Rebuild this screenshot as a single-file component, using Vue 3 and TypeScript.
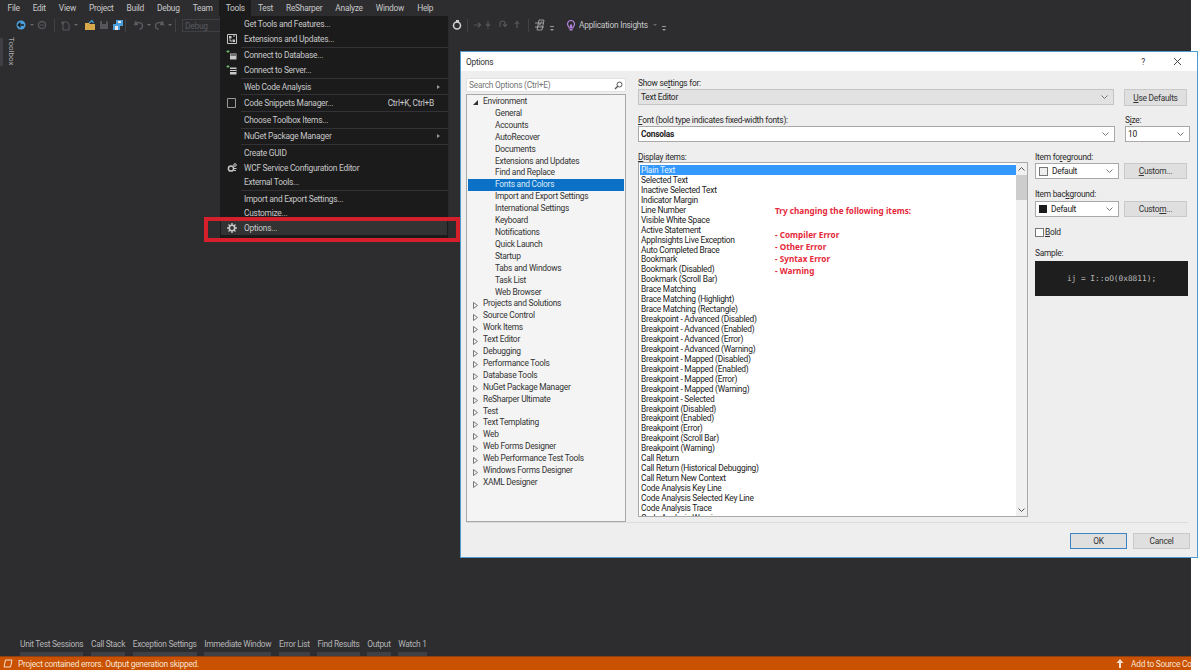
<script setup lang="ts">
const menus = ['File','Edit','View','Project','Build','Debug','Team','Tools','Test','ReSharper','Analyze','Window','Help']
type Row = { t: string; key?: string; arrow?: boolean; sep?: boolean; icon?: string; cut?: boolean }
const rows: Row[] = [
  { t: 'Get Tools and Features...' },
  { t: 'Extensions and Updates...', icon: 'ext', sep: true },
  { t: 'Connect to Database...', icon: 'db' },
  { t: 'Connect to Server...', icon: 'srv', sep: true },
  { t: 'Web Code Analysis', arrow: true, sep: true },
  { t: 'Code Snippets Manager...', key: 'Ctrl+K, Ctrl+B', icon: 'snip', sep: true },
  { t: 'Choose Toolbox Items...', sep: true },
  { t: 'NuGet Package Manager', arrow: true, sep: true },
  { t: 'Create GUID' },
  { t: 'WCF Service Configuration Editor', icon: 'wcf' },
  { t: 'External Tools...', sep: true },
  { t: 'Import and Export Settings...' },
  { t: 'Customize...' },
]
const envChildren = ['General','Accounts','AutoRecover','Documents','Extensions and Updates','Find and Replace','Fonts and Colors','Import and Export Settings','International Settings','Keyboard','Notifications','Quick Launch','Startup','Tabs and Windows','Task List','Web Browser']
const collapsed = ['Projects and Solutions','Source Control','Work Items','Text Editor','Debugging','Performance Tools','Database Tools','NuGet Package Manager','ReSharper Ultimate','Test','Text Templating','Web','Web Forms Designer','Web Performance Test Tools','Windows Forms Designer','XAML Designer']
const display = ['Plain Text','Selected Text','Inactive Selected Text','Indicator Margin','Line Number','Visible White Space','Active Statement','AppInsights Live Exception','Auto Completed Brace','Bookmark','Bookmark (Disabled)','Bookmark (Scroll Bar)','Brace Matching','Brace Matching (Highlight)','Brace Matching (Rectangle)','Breakpoint - Advanced (Disabled)','Breakpoint - Advanced (Enabled)','Breakpoint - Advanced (Error)','Breakpoint - Advanced (Warning)','Breakpoint - Mapped (Disabled)','Breakpoint - Mapped (Enabled)','Breakpoint - Mapped (Error)','Breakpoint - Mapped (Warning)','Breakpoint - Selected','Breakpoint (Disabled)','Breakpoint (Enabled)','Breakpoint (Error)','Breakpoint (Scroll Bar)','Breakpoint (Warning)','Call Return','Call Return (Historical Debugging)','Call Return New Context','Code Analysis Key Line','Code Analysis Selected Key Line','Code Analysis Trace','Code Analysis Warning']
const notes = ['- Compiler Error','- Other Error','- Syntax Error','- Warning']
const tabs = ['Unit Test Sessions','Call Stack','Exception Settings','Immediate Window','Error List','Find Results','Output','Watch 1']
</script>

<template>
  <div class="page">
    <div class="ide">
      <nav class="menubar">
        <span v-for="m in menus" :key="m" class="mi" :class="{ open: m === 'Tools' }">{{ m }}</span>
      </nav>

      <div class="toolbar">
        <div class="tb-left">
          <svg width="12" height="12" viewBox="0 0 12 12" class="tb-i"><circle cx="6" cy="6" r="4.5" fill="#4a9fdc"/><path d="M3 6h6M5.5 3.8 3.2 6l2.3 2.2" stroke="#1e1e1e" stroke-width="1.3" fill="none"/></svg>
          <span class="drop"></span>
          <svg width="10" height="10" viewBox="0 0 10 10" class="tb-i m1"><circle cx="5" cy="5" r="3.6" fill="none" stroke="#55555a" stroke-width="1.5"/><path d="M3 5h4" stroke="#55555a"/></svg>
          <i class="tb-sep"></i>
          <svg width="10" height="11" viewBox="0 0 10 11" class="tb-i"><path d="M2 2h4l2 2v6H2z" fill="none" stroke="#59595e"/><path d="M0 3h3M1.5 1.500v3" stroke="#59595e"/></svg>
          <span class="drop"></span>
          <svg width="12" height="11" viewBox="0 0 12 11" class="tb-i m2"><path d="M1 3h4l1 1h5v6H1z" fill="#d7a94b"/><path d="M5 3l3-2.500L9.500 3" fill="none" stroke="#4a9fdc" stroke-width="1.300"/></svg>
          <svg width="10" height="10" viewBox="0 0 10 10" class="tb-i m3"><path d="M1 1h7l1 1v7H1z" fill="#55555a"/><path d="M3 1h4v3H3z" fill="#2d2d30"/></svg>
          <svg width="12" height="12" viewBox="0 0 12 12" class="tb-i m3"><path d="M4 1h7v6H8v4H1V5h3z" fill="#4a9fdc"/><path d="M3 7h3v4H3zM6 2h3v2H6z" fill="#e8e8e8"/></svg>
          <i class="tb-sep s2"></i>
          <svg width="11" height="10" viewBox="0 0 11 10" class="tb-i"><path d="M3 1 1.500 4.500 5 4.500M2 4.500C4 1.500 9.500 2 9.500 6c0 2-1.500 3-3 3.500" fill="none" stroke="#59595e" stroke-width="1.400"/></svg>
          <span class="drop"></span>
          <svg width="11" height="10" viewBox="0 0 11 10" class="tb-i m1"><path d="M8 1l1.500 3.500H6M9 4.500C7 1.500 1.500 2 1.500 6c0 2 1.500 3 3 3.500" fill="none" stroke="#59595e" stroke-width="1.400"/></svg>
          <span class="drop"></span>
          <i class="tb-sep s3"></i>
          <span class="debug">Debug</span>
        </div>
        <div class="tb-right">
          <svg width="10" height="10" viewBox="0 0 10 10"><circle cx="5" cy="5.500" r="3.500" fill="none" stroke="#d0d0d0" stroke-width="1.600"/><path d="M4 0h3v2.500H4z" fill="#d0d0d0"/></svg>
          <i class="tb-sep s4"></i>
          <svg width="52" height="10" viewBox="0 0 52 10" class="steps"><path d="M1 5h6M5 2.500 7.500 5 5 7.500" fill="none" stroke="#55555a" stroke-width="1.200"/><path d="M15 1v5M13 4l2 2.500L17 4M15 8v1" fill="none" stroke="#55555a" stroke-width="1.200"/><path d="M27 7V3.500a2.500 2.500 0 0 1 5 0V6M30 4.500 32 6.500 34 4.500" fill="none" stroke="#55555a" stroke-width="1.200"/><path d="M44 8V2M42 4l2-2.500L46 4" fill="none" stroke="#55555a" stroke-width="1.200"/></svg>
          <i class="tb-sep s5"></i>
          <svg width="11" height="12" viewBox="0 0 11 12"><path d="M3 11 5 1h5L8 11zM1 4h9M1 8h9" fill="none" stroke="#a4a4a6" stroke-width=".9"/><path d="M4 3 9 9M8 2 3 9" stroke="#a4a4a6" stroke-width=".7"/></svg>
          <span class="ovf o1"></span>
          <svg width="8" height="11" viewBox="0 0 8 11" class="bulb"><path d="M4 .5a3.400 3.400 0 0 1 2 6.200V8H2V6.700A3.400 3.400 0 0 1 4 .5z" fill="none" stroke="#b180d7" stroke-width="1.200"/><path d="M3 4.500h2V8H3zM2.500 9h3v1.500h-3z" fill="#b180d7"/></svg>
          <span class="ai">Application Insights</span>
          <span class="drop d2"></span>
          <span class="ovf"></span>
        </div>
      </div>

      <main class="work">
        <aside class="toolstrip"><span class="toolbox">Toolbox</span></aside>
      </main>

      <div class="tabs">
        <span v-for="t in tabs" :key="t" class="tab">{{ t }}</span>
      </div>

      <footer class="status">
        <svg width="10" height="9" viewBox="0 0 10 9" class="st-i"><path d="M2.500 1H9L7.500 8H1z" fill="none" stroke="#f4e0d2" stroke-width="1"/></svg>
        <span class="st-t">Project contained errors. Output generation skipped.</span>
        <svg width="8" height="9" viewBox="0 0 8 9" class="st-up"><path d="M4 0 7.500 4H5v5H3V4H.5z" fill="#f4e0d2"/></svg>
        <span class="st-src">Add to Source Control</span>
      </footer>
    </div>

    <!-- Tools menu -->
    <div class="menu">
      <template v-for="r in rows" :key="r.t">
        <div class="row">
          <span class="ric">
            <svg v-if="r.icon === 'ext'" width="10" height="10" viewBox="0 0 10 10"><path d="M.5.5h9v9h-9z" fill="none" stroke="#c8c8c8"/><path d="M2 2h2.500v2.500H2zM5.500 5.500H8V8H5.500z" fill="#c8c8c8"/><path d="M6 2h2M2 6h2v2" stroke="#c8c8c8" fill="none"/></svg>
            <svg v-else-if="r.icon === 'db'" width="11" height="10" viewBox="0 0 11 10"><path d="M4 3.500h6.500V9.500H4z" fill="#c8c8c8"/><path d="M4.500 5h5.500" stroke="#1b1b1c"/><path d="M.500 1.500h3M2 0v3" stroke="#6fb56f"/></svg>
            <svg v-else-if="r.icon === 'srv'" width="11" height="10" viewBox="0 0 11 10"><path d="M4 2.500h6.500v7H4z" fill="#c8c8c8"/><path d="M4 4.500h6.500M4 6.500h6.500" stroke="#1b1b1c"/><path d="M.500 1.500h3M2 0v3" stroke="#6fb56f"/></svg>
            <svg v-else-if="r.icon === 'snip'" width="9" height="10" viewBox="0 0 9 10"><path d="M.5.5h8v9h-8z" fill="none" stroke="#9a9a9a"/></svg>
            <svg v-else-if="r.icon === 'wcf'" width="10" height="10" viewBox="0 0 10 10"><circle cx="4" cy="5.500" r="2.600" fill="none" stroke="#c8c8c8" stroke-width="1.500"/><circle cx="8" cy="2" r="1.300" fill="none" stroke="#c8c8c8"/><path d="M7 5.500h2.500M7 7.500h2" stroke="#c8c8c8"/></svg>
          </span>
          <span class="rt">{{ r.t }}</span>
          <span v-if="r.key" class="rk">{{ r.key }}</span>
          <span v-if="r.arrow" class="ra"></span>
        </div>
        <div v-if="r.sep" class="msep"></div>
      </template>
      <div class="row sel">
        <span class="ric">
          <svg width="10" height="10" viewBox="0 0 10 10"><circle cx="5" cy="5" r="2.700" fill="none" stroke="#c8c8c8" stroke-width="1.600"/><path d="M5 0v2M5 8v2M0 5h2M8 5h2M1.500 1.500 3 3M7 7l1.500 1.500M8.500 1.500 7 3M3 7 1.500 8.500" stroke="#c8c8c8" stroke-width="1.300"/></svg>
        </span>
        <span class="rt">Options...</span>
      </div>
    </div>
    <div class="redbox"></div>

    <!-- Options dialog -->
    <section class="dialog">
      <header class="dlg-title">
        <span>Options</span>
        <span class="help">?</span>
        <svg width="9" height="9" viewBox="0 0 9 9"><path d="M1 1l7 7M8 1 1 8" stroke="#333" stroke-width=".9"/></svg>
      </header>

      <div class="dlg-body">
        <div class="left">
          <div class="search">
            <span>Search Options (Ctrl+E)</span>
            <svg width="9" height="9" viewBox="0 0 9 9"><circle cx="5.500" cy="3.500" r="2.500" fill="none" stroke="#555" stroke-width="1"/><path d="M3.700 5.300 1 8" stroke="#555" stroke-width="1.400"/></svg>
          </div>
          <div class="tree">
            <div class="node"><svg width="5" height="5" viewBox="0 0 5 5" class="tw"><path d="M5 0v5H0z" fill="#333"/></svg>Environment</div>
            <div v-for="c in envChildren" :key="c" class="node child" :class="{ cur: c === 'Fonts and Colors' }">{{ c }}</div>
            <div v-for="c in collapsed" :key="c" class="node"><svg width="5" height="7" viewBox="0 0 5 7" class="tw"><path d="M.5.5 4.500 3.500.5 6.500z" fill="none" stroke="#777"/></svg>{{ c }}</div>
          </div>
        </div>

        <div class="right">
          <label class="lbl">Show se<u>t</u>tings for:</label>
          <div class="line">
            <div class="combo gray grow"><span>Text Editor</span><svg class="chev" width="7" height="4" viewBox="0 0 7 4"><path d="M.5.5 3.500 3.500 6.500.5" fill="none" stroke="#777"/></svg></div>
            <button class="btn ud"><u>U</u>se Defaults</button>
          </div>

          <div class="line lbls">
            <label class="lbl grow"><u>F</u>ont (bold type indicates fixed-width fonts):</label>
            <label class="lbl sz">S<u>i</u>ze:</label>
          </div>
          <div class="line">
            <div class="combo grow"><b>Consolas</b><svg class="chev" width="7" height="4" viewBox="0 0 7 4"><path d="M.5.5 3.500 3.500 6.500.5" fill="none" stroke="#777"/></svg></div>
            <div class="combo size"><span>10</span><svg class="chev" width="7" height="4" viewBox="0 0 7 4"><path d="M.5.5 3.500 3.500 6.500.5" fill="none" stroke="#777"/></svg></div>
          </div>

          <div class="main">
            <div class="disp">
              <label class="lbl"><u>D</u>isplay items:</label>
              <div class="list">
                <div class="items">
                  <div v-for="(d, i) in display" :key="d" class="item" :class="{ on: i === 0 }">{{ d }}</div>
                  <div class="note">
                    <p>Try changing the following items:</p>
                    <p v-for="n in notes" :key="n">{{ n }}</p>
                  </div>
                </div>
                <div class="sb">
                  <svg width="7" height="4" viewBox="0 0 7 4"><path d="M.5 3.500 3.500.5 6.500 3.500" fill="none" stroke="#555"/></svg>
                  <div class="thumb"></div>
                  <svg width="7" height="4" viewBox="0 0 7 4"><path d="M.5.5 3.500 3.500 6.500.5" fill="none" stroke="#555"/></svg>
                </div>
              </div>
            </div>
            <div class="side">
              <label class="lbl">Item fo<u>r</u>eground:</label>
              <div class="line cl">
                <div class="combo color"><i class="sw light"></i><span>Default</span><svg class="chev" width="7" height="4" viewBox="0 0 7 4"><path d="M.5.5 3.500 3.500 6.500.5" fill="none" stroke="#777"/></svg></div>
                <button class="btn cu"><u>C</u>ustom...</button>
              </div>
              <label class="lbl l2">Item bac<u>k</u>ground:</label>
              <div class="line cl">
                <div class="combo color"><i class="sw dark"></i><span>Default</span><svg class="chev" width="7" height="4" viewBox="0 0 7 4"><path d="M.5.5 3.500 3.500 6.500.5" fill="none" stroke="#777"/></svg></div>
                <button class="btn cu">Custo<u>m</u>...</button>
              </div>
              <div class="check"><i></i><span><u>B</u>old</span></div>
              <label class="lbl l3">Sample:</label>
              <div class="sample">ij = I::oO(0x8811);</div>
            </div>
          </div>
        </div>
      </div>

      <div class="dlg-foot">
        <button class="btn ok">OK</button>
        <button class="btn cancel">Cancel</button>
      </div>
    </section>
  </div>
</template>

<style>
html, body { margin: 0; background: #fff; }
</style>

<style scoped>
.page { position: relative; width: 1200px; height: 670px; overflow: hidden; background: #fff; font-family: Roboto, "Noto Sans", sans-serif; font-size: 8.4px; letter-spacing: -.25px; color: #222; }
.ide { width: 1191px; height: 670px; background: #2d2d30; display: flex; flex-direction: column; color: #c8c8c8; }

.menubar { height: 16px; display: flex; align-items: center; padding-left: 1px; flex: none; }
.mi { padding: 0 6.500px; line-height: 16px; white-space: nowrap; }
.mi.open { background: #1b1b1c; }

.toolbar { height: 18px; flex: none; display: flex; align-items: center; }
.tb-left { width: 452px; padding-left: 15px; box-sizing: border-box; display: flex; align-items: center; flex: none; }
.tb-right { display: flex; align-items: center; }
.tb-i { flex: none; }
.m1 { margin-left: 3px; }
.m2 { margin-left: 6px; }
.m3 { margin-left: 3px; }
.drop { width: 0; height: 0; margin-left: 3px; border: 2px solid transparent; border-top: 2.500px solid #6a6a6e; border-bottom: 0; }
.tb-sep { width: 1px; height: 13px; background: #424246; margin: 0 6px 0 7px; }
.tb-sep.s2 { margin: 0 7px 0 1px; }
.tb-sep.s3 { margin: 0 6px 0 3px; }
.tb-sep.s4 { margin: 0 4px 0 5px; }
.tb-sep.s5 { margin: 0 5px 0 3px; }
.debug { width: 50px; height: 13px; line-height: 12px; border: 1px solid #3f3f46; padding-left: 2px; color: #59595e; box-sizing: border-box; }
.steps { margin-left: 1px; }
.ovf { width: 4px; height: 4px; margin-left: 5px; margin-top: 6px; border-top: 1px solid #999; box-sizing: border-box; position: relative; }
.ovf::after { content: ""; display: block; margin-top: 1.500px; border: 2px solid transparent; border-top: 2px solid #999; border-bottom: 0; width: 0; }
.bulb { margin-left: 13px; }
.ai { margin-left: 4px; white-space: nowrap; }
.d2 { margin-left: 5px; }

.work { flex: 1; display: flex; min-height: 0; }
.toolstrip { width: 18px; padding-top: 3px; position: relative; }
.toolstrip::before { content: ""; position: absolute; left: 0; top: 4px; width: 3px; height: 28px; background: #3f3f46; }
.toolbox { writing-mode: vertical-rl; display: block; margin-left: 6px; color: #a8a8a8; font-size: 8px; line-height: 11px; letter-spacing: 0; }

.tabs { flex: none; height: 17px; display: flex; gap: 7.700px; padding-left: 20px; letter-spacing: -.3px; }
.tab { height: 17px; line-height: 11px; box-sizing: border-box; border-bottom: 4px solid #3f3f46; color: #b4b4b4; white-space: nowrap; }

.status { flex: none; height: 14px; background: #ca5100; border-top: 1px solid #8f4010; box-sizing: border-box; display: flex; align-items: center; color: #f6e3d6; padding-left: 3px; overflow: hidden; }
.st-i { flex: none; }
.st-t { margin-left: 5px; flex: 1; white-space: nowrap; }
.st-up { flex: none; margin-right: 7px; }
.st-src { width: 60px; white-space: nowrap; overflow: hidden; flex: none; }

.menu { position: absolute; left: 220px; top: 16px; width: 229px; height: 224px; box-sizing: border-box; padding-top: 1px; background: #1b1b1c; border-right: 1px solid #2a2a2e; color: #c8c8c8; overflow: hidden; }
.row { height: 14.600px; display: flex; align-items: center; white-space: nowrap; }
.ric { width: 24px; flex: none; display: flex; justify-content: center; padding-right: 1px; box-sizing: border-box; }
.rt { flex: 1; }
.rk { margin-right: 14px; }
.ra { width: 0; height: 0; margin-right: 8px; border: 2.500px solid transparent; border-left: 3px solid #999; border-right: 0; }
.msep { height: 1px; margin: .5px 0 .5px 21px; background: #333337; }
.row.sel { background: #333334; margin: 0 1px; }
.row.sel .ric { width: 23px; }
.redbox { position: absolute; left: 204px; top: 217px; width: 256px; height: 25px; box-sizing: border-box; border: 4px solid #d5202c; }

.dialog { position: absolute; left: 460px; top: 51px; width: 738px; height: 507px; box-sizing: border-box; border: 1px solid #4f9bd0; background: #eeeeee; display: flex; flex-direction: column; color: #2a2a2a; }
.dlg-title { height: 19px; flex: none; background: #fff; display: flex; align-items: center; padding: 0 15px 0 5px; color: #333; }
.dlg-title span:first-child { flex: 1; }
.help { margin-right: 28px; }
.dlg-body { flex: 1; display: flex; padding: 5px 7px 0 5px; min-height: 0; }

.left { width: 160px; flex: none; display: flex; flex-direction: column; margin-top: 2px; }
.search { height: 14px; flex: none; background: #fff; border: 1px solid #e2e2e2; box-sizing: border-box; display: flex; justify-content: space-between; align-items: center; padding: 0 2px; color: #777; }
.tree { margin-top: 2px; height: 428px; flex: none; box-sizing: border-box; border: 1px solid #a8a8a8; background: #f4f4f4; padding-top: 1px; overflow: hidden; }
.node { height: 11.920px; line-height: 11.920px; padding-left: 16px; position: relative; white-space: nowrap; color: #333; }
.node.child { padding-left: 28px; }
.node.cur { background: #0a71c6; color: #dcecf8; margin: 0 1px; padding-left: 27px; }
.tw { position: absolute; left: 6px; top: 3.500px; }

.right { flex: 1; margin-left: 12px; display: flex; flex-direction: column; min-width: 0; margin-top: 1px; }
.lbl { display: block; line-height: 12px; white-space: nowrap; color: #2a2a2a; }
u { text-decoration-thickness: 1px; }
.line { display: flex; gap: 10px; }
.grow { flex: 1; min-width: 0; }
.combo { height: 16px; box-sizing: border-box; border: 1px solid #a9a9a9; background: #fff; display: flex; align-items: center; padding: 0 5px 0 2px; color: #222; white-space: nowrap; }
.combo > span, .combo > b { flex: 1; }
.combo.gray { background: #e2e2e2; border-color: #c4c4c4; }
.chev { flex: none; }
.btn { height: 17px; padding: 0; box-sizing: border-box; border: 1px solid #c9c9c9; background: #dfdfdf; font: inherit; letter-spacing: inherit; color: #333; }
.ud { width: 63px; margin-right: 3px; }
.lbls { margin-top: 8px; }
.sz { width: 65px; }
.size { width: 65px; }
.main { display: flex; margin-top: 9px; gap: 7px; }
.disp { width: 390px; flex: none; }
.list { margin-top: -1px; height: 355px; box-sizing: border-box; border: 1px solid #a9a9a9; background: #fff; display: flex; position: relative; }
.items { flex: 1; padding: 2px 0 0 1px; overflow: hidden; min-width: 0; }
.item { height: 9.940px; line-height: 11.400px; padding-left: 1px; white-space: nowrap; color: #222; }
.item.on { background: #3399ff; color: #e6f2ff; }
.note { position: absolute; left: 136px; top: 42px; color: #e5283a; font-family: "Noto Sans", sans-serif; font-size: 8.200px; font-weight: 700; line-height: 12px; letter-spacing: 0; }
.note p { margin: 0; }
.note p:first-child { margin-bottom: 11.500px; }
.sb { width: 11px; flex: none; background: #f0f0f0; display: flex; flex-direction: column; align-items: center; padding: 4px 0; box-sizing: border-box; }
.thumb { width: 100%; height: 25px; margin-top: 4px; background: #cdcdcd; }
.sb svg:last-child { margin-top: auto; }
.side { flex: 1; min-width: 0; margin-top: 0; }
.cl { gap: 5px; margin-top: 0; }
.color { width: 84px; flex: none; padding-left: 3px; }
.sw { width: 8px; height: 8px; margin-right: 4px; flex: none; display: block; }
.sw.light { background: #eee; border: 1px solid #777; box-sizing: content-box; width: 7px; height: 7px; }
.sw.dark { background: #1a1a1a; }
.cu { width: 63px; height: 16px; }
.l2 { margin-top: 9px; margin-bottom: 1px; }
.check { margin-top: 10px; display: flex; align-items: center; gap: 1px; }
.check i { width: 9px; height: 9px; background: #fff; border: 1px solid #777; display: block; box-sizing: border-box; }
.l3 { margin-top: 10px; margin-bottom: 2px; }
.sample { width: 153px; height: 35px; background: #1e1e1e; color: #bbb; font-family: "DejaVu Sans Mono", "Liberation Mono", monospace; font-size: 7.800px; letter-spacing: 0; display: flex; align-items: center; justify-content: center; }

.dlg-foot { flex: none; height: 35px; margin: 0 9px 0 5px; padding: 10px 0 0; box-sizing: border-box; border-top: 1px solid #dcdcdc; display: flex; justify-content: flex-end; gap: 6px; }
.ok, .cancel { width: 57px; height: 16px; }
.ok { border: 1.500px solid #3a85c6; }
.cancel { margin-right: -2px; }
</style>
